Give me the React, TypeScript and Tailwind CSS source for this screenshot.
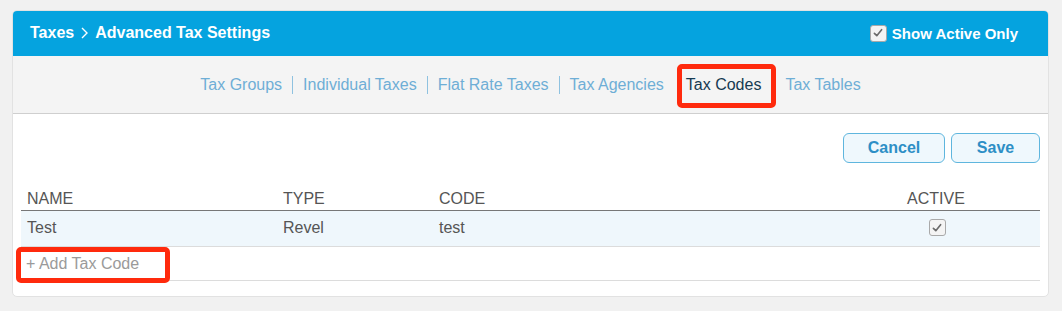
import React from "react";

function Check({ className }: { className?: string }) {
  return (
    <span className={"inline-flex items-center justify-center rounded-[3px] border border-[#a9a9a9] bg-[#f4f4f4] " + (className || "")}>
      <svg viewBox="0 0 16 16" className="w-[12px] h-[12px]">
        <path d="M3.2 8.4 L6.4 11.6 L12.8 3.6" fill="none" stroke="#6b6b6b" strokeWidth="2.2" strokeLinecap="round" strokeLinejoin="round" />
      </svg>
    </span>
  );
}

const tabs = ["Tax Groups", "Individual Taxes", "Flat Rate Taxes", "Tax Agencies"];

export default function App() {
  return (
    <div className="w-[1062px] h-[311px] bg-[#f1f1f1] pt-[10px] pl-[12px]" style={{ fontFamily: '"Liberation Sans", Arial, sans-serif' }}>
      <div className="w-[1037px] h-[287px] bg-white rounded-[5px] border border-[#e2e2e2] overflow-hidden flex flex-col">
        <div className="h-[46px] bg-[#05a3df] flex items-center justify-between pl-[18px] pr-[31px] shrink-0 -mx-px -mt-px">
          <div className="flex items-center text-white font-bold text-[16px] leading-none">
            <span>Taxes</span>
            <svg viewBox="0 0 7 12" className="w-[7px] h-[12px] mx-[7px]">
              <path d="M1 1 L6 6 L1 11" fill="none" stroke="white" strokeWidth="1.4" />
            </svg>
            <span>Advanced Tax Settings</span>
          </div>
          <div className="flex items-center">
            <Check className="w-[17px] h-[17px] mr-[5px]" />
            <span className="text-white font-bold text-[15px] leading-none">Show Active Only</span>
          </div>
        </div>
        <div className="h-[58px] bg-[#f4f4f4] border-b border-[#cfcfcf] flex items-center justify-center shrink-0 text-[16px] leading-none pt-[1px]">
          {tabs.map((t, i) => (
            <React.Fragment key={t}>
              <span className="text-[#6eaed6]">{t}</span>
              {i < tabs.length - 1 ? (
                <span className="w-px h-[18px] bg-[#8fc2e0] mx-[10px]" />
              ) : (
                <span className="w-[22px]" />
              )}
            </React.Fragment>
          ))}
          <span className="relative text-[#163a52]">
            Tax Codes
            <span className="absolute left-[-9px] right-[-15px] top-[-13px] bottom-[-15px] border-[5px] border-[#ff2a0d] rounded-[5px]" />
          </span>
          <span className="w-[24px]" />
          <span className="text-[#6eaed6]">Tax Tables</span>
        </div>
        <div className="flex-1 px-[8px] pt-[19px] relative">
          <div className="flex justify-end gap-[6px]">
            <button className="h-[30px] w-[102px] rounded-[6px] border border-[#5fb6de] bg-[#eff8fd] text-[#2d8fc6] font-bold text-[16px] leading-none">Cancel</button>
            <button className="h-[30px] w-[89px] rounded-[6px] border border-[#5fb6de] bg-[#eff8fd] text-[#2d8fc6] font-bold text-[16px] leading-none">Save</button>
          </div>
          <div className="mt-[25px] text-[16px] leading-none text-[#555]">
            <div className="grid grid-cols-[256px_156px_398px_210px] h-[23px] border-b border-[#777] items-center pb-[1px]">
              <span className="pl-[6px]">NAME</span>
              <span className="pl-[6px]">TYPE</span>
              <span className="pl-[6px]">CODE</span>
              <span className="text-center">ACTIVE</span>
            </div>
            <div className="grid grid-cols-[256px_156px_398px_210px] h-[36px] bg-[#eff7fc] border-b border-[#dcdcdc] items-center pb-[2px]">
              <span className="pl-[6px]">Test</span>
              <span className="pl-[6px]">Revel</span>
              <span className="pl-[6px]">test</span>
              <span className="flex justify-center pl-[2px]">
                <Check className="w-[17px] h-[17px]" />
              </span>
            </div>
            <div className="h-[34px] border-b border-[#dcdcdc] flex items-center">
              <span className="relative pl-[5px] text-[#9a9a9a]">
                + Add Tax Code
                <span className="absolute left-[-5px] right-[-31px] top-[-9px] bottom-[-11px] border-[5px] border-[#ff2a0d] rounded-[5px]" />
              </span>
            </div>
          </div>
        </div>
      </div>
    </div>
  );
}
